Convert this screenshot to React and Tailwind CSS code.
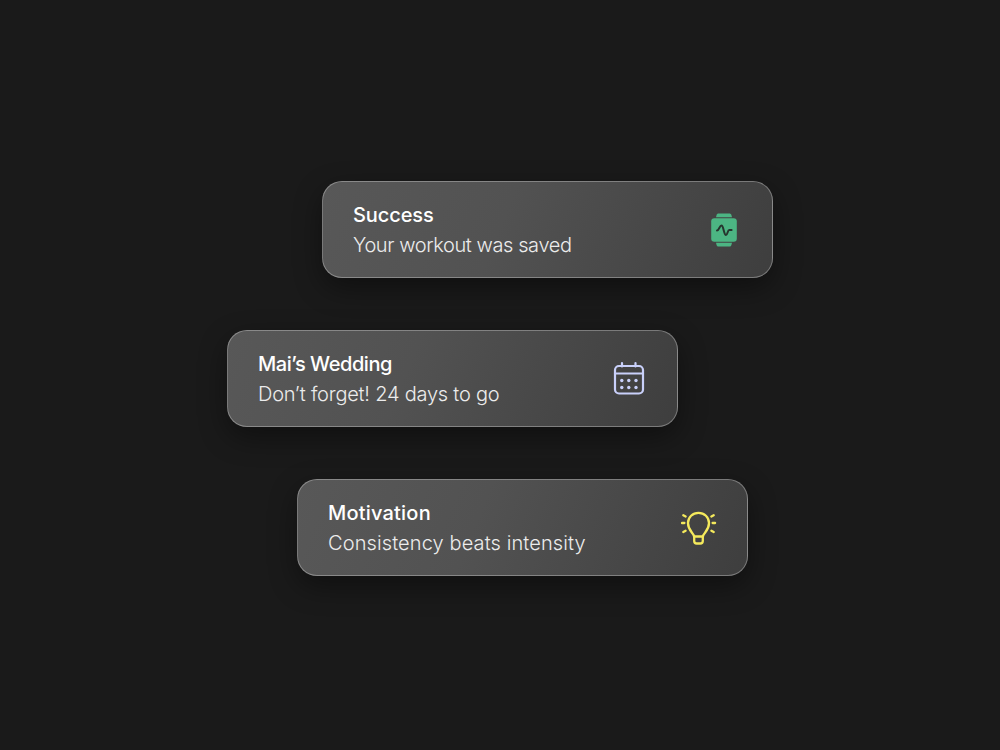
const cards = [
  { title: "Success", text: "Your workout was saved", offset: "ml-[322px]", titleTrack: "tracking-[-0.1px]", textTrack: "tracking-[-0.4px]", icon: <WatchIcon /> },
  { title: "Mai’s Wedding", text: "Don’t forget! 24 days to go", offset: "ml-[227px]", titleTrack: "tracking-[-0.45px]", textTrack: "tracking-[-0.22px]", icon: <CalendarIcon /> },
  { title: "Motivation", text: "Consistency beats intensity", offset: "ml-[297px]", titleTrack: "tracking-[0.2px]", textTrack: "tracking-[0.11px]", icon: <BulbIcon /> },
];

function WatchIcon() {
  return (
    <svg width="36" height="36" viewBox="0 0 36 36" fill="none">
      <path d="M10.6 3 C10.9 2 11.6 1.5 12.6 1.5 H23.4 C24.4 1.5 25.1 2 25.4 3 L26 5.3 H10 Z" fill="#4cb583" />
      <path d="M10 30.7 H26 L25.4 33 C25.1 34 24.4 34.5 23.4 34.5 H12.6 C11.6 34.5 10.9 34 10.6 33 Z" fill="#4cb583" />
      <rect x="5.2" y="6.3" width="25.6" height="23.4" rx="3.2" fill="#4cb583" />
      <path d="M11 18.6 C13 18.6 13.6 13.6 15.5 13.6 C17.6 13.6 17.8 23 20 23 C21.6 23 21.6 18 23.2 18 H25.6" stroke="#26352e" strokeWidth="2" strokeLinecap="round" strokeLinejoin="round" />
    </svg>
  );
}

function CalendarIcon() {
  return (
    <svg width="36" height="36" viewBox="0 0 36 36" fill="none" stroke="#c9d0fa" strokeWidth="2.2" strokeLinecap="round">
      <rect x="4" y="5" width="28" height="27.5" rx="4" />
      <path d="M4 12.5 H32" />
      <path d="M11 2 V5.5 M24.5 2 V5.5" />
      <g fill="#c9d0fa" stroke="none">
        <circle cx="10.8" cy="19.5" r="1.7" />
        <circle cx="17.8" cy="19.5" r="1.7" />
        <circle cx="25" cy="19.5" r="1.7" />
        <circle cx="10.8" cy="26.5" r="1.7" />
        <circle cx="17.8" cy="26.5" r="1.7" />
        <circle cx="25" cy="26.5" r="1.7" />
      </g>
    </svg>
  );
}

function BulbIcon() {
  return (
    <svg width="36" height="36" viewBox="0 0 36 36" fill="none" stroke="#f4e95c" strokeWidth="2.3" strokeLinecap="round" strokeLinejoin="round">
      <path d="M13 26.5 C13 23.2 7 21 7 13 C7 7.2 11.7 2.8 17.5 2.8 C23.3 2.8 28 7.2 28 13 C28 21 22 23.2 22 26.5 Z" />
      <path d="M13.2 26.5 V31 C13.2 32.5 14.2 33.5 15.7 33.5 H19.3 C20.8 33.5 21.8 32.5 21.8 31 V26.5" />
      <path d="M2.3 5.2 L4.6 6.5 M0.9 13 H3.4 M2.3 22 L4.6 20.7 M32.7 5.2 L30.4 6.5 M34.1 13 H31.6 M32.7 22 L30.4 20.7" />
    </svg>
  );
}

export default function App() {
  return (
    <div className="min-h-screen bg-[#1a1a1a] pt-[181px] flex flex-col gap-[52px] font-['Inter',sans-serif]">
      {cards.map((c) => (
        <div
          key={c.title}
          className={`${c.offset} w-[451px] h-[97px] rounded-[20px] border border-white/30 bg-[linear-gradient(112deg,#585858_0%,#525252_40%,#3e3e3e_100%)] shadow-[0_10px_28px_rgba(0,0,0,0.4)] flex items-center justify-between px-[30px]`}
        >
          <div className="flex flex-col pt-[1px]">
            <div className={`${c.titleTrack} text-[20px] leading-[30px] font-medium text-white`}>{c.title}</div>
            <div className={`${c.textTrack} text-[20px] leading-[30px] font-light text-[#ececec]`}>{c.text}</div>
          </div>
          {c.icon}
        </div>
      ))}
    </div>
  );
}
